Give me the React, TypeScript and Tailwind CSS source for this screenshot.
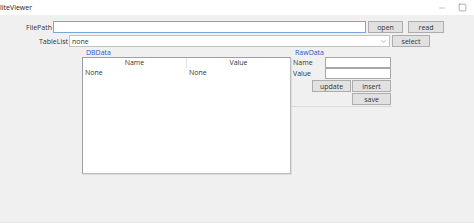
import { ChevronDown, Minus, Square } from 'lucide-react';

const FONT = { fontFamily: '"Open Sans", "Noto Sans", sans-serif' };

function Btn({ label, w }: { label: string; w: string }) {
  return (
    <div
      className={`${w} h-[12px] flex items-center justify-center bg-[#e1e1e1] border border-[#adadad] text-[7px] text-[#333] leading-none`}
    >
      {label}
    </div>
  );
}

export default function App() {
  return (
    <div className="w-[474px] h-[223px] bg-[#f0f0f0] flex flex-col overflow-hidden" style={FONT}>
      {/* Title bar */}
      <div className="h-[15px] bg-white flex items-center shrink-0">
        <span className="flex-1 text-[7px] text-[#222] leading-none">liteViewer</span>
        <div className="w-[10px] flex justify-center text-[#444]">
          <Minus size={8} strokeWidth={1} />
        </div>
        <div className="w-[10px] ml-[10px] mr-[7px] flex justify-center text-[#444]">
          <Square size={9} strokeWidth={1.1} />
        </div>
      </div>

      {/* Body */}
      <div className="flex-1 flex flex-col pt-[6px] border-b border-[#e6e6e6]">
        {/* FilePath row */}
        <div className="flex items-center h-[12px]">
          <div className="w-[53px] text-right text-[7px] leading-none text-[#333] pr-[1px]">FilePath</div>
          <div className="w-[313px] h-[12px] bg-white border border-[#7aa5d8]" />
          <div className="w-[2px]" />
          <Btn label="open" w="w-[35px]" />
          <div className="w-[5px]" />
          <Btn label="read" w="w-[36px]" />
        </div>

        {/* TableList row */}
        <div className="flex items-center h-[12px] mt-[2px]">
          <div className="w-[69px] text-right text-[7px] leading-none text-[#333] pr-[1px]">TableList</div>
          <div className="w-[321px] h-[12px] bg-white border border-[#c2c2c2] flex items-center justify-between pl-[2px] pr-[2px]">
            <span className="text-[7px] leading-none text-[#333]">none</span>
            <ChevronDown size={7} strokeWidth={1.5} className="text-[#555]" />
          </div>
          <div className="w-[2px]" />
          <Btn label="select" w="w-[38px]" />
        </div>

        {/* Data area */}
        <div className="flex mt-[2px] pl-[82px]">
          {/* DBData */}
          <div className="w-[209px] flex flex-col">
            <div className="h-[8px] pl-[4px] text-[7px] leading-[8px] text-[#2a55d0]">DBData</div>
            <div className="h-[117px] bg-white border border-[#9f9f9f] border-r-[#bdbdbd] border-b-[#bdbdbd] shadow-[1px_1px_0_#dcdcdc] flex flex-col">
              <div className="h-[10px] flex text-[7px] leading-[10px] text-[#333]">
                <div className="w-[104px] text-center border-r border-[#e5e5e5]">Name</div>
                <div className="flex-1 text-center">Value</div>
              </div>
              <div className="h-[10px] flex text-[7px] leading-[10px] text-[#333]">
                <div className="w-[104px] pl-[2px]">None</div>
                <div className="flex-1 pl-[2px]">None</div>
              </div>
            </div>
          </div>

          {/* RawData */}
          <div className="w-[101px] flex flex-col border-b border-[#dadada] self-start pb-[1px]">
            <div className="h-[8px] pl-[4px] text-[7px] leading-[8px] text-[#2a55d0]">RawData</div>
            <div className="flex items-center h-[11px]">
              <div className="w-[34px] pl-[2px] text-[7px] leading-none text-[#333]">Name</div>
              <div className="w-[66px] h-[11px] bg-white border border-[#a8a8a8]" />
            </div>
            <div className="flex items-center h-[11px]">
              <div className="w-[34px] pl-[2px] text-[7px] leading-none text-[#333]">Value</div>
              <div className="w-[66px] h-[11px] bg-white border border-[#a8a8a8]" />
            </div>
            <div className="flex h-[12px] mt-[1px] pl-[21px] gap-[1px]">
              <Btn label="update" w="w-[39px]" />
              <Btn label="insert" w="w-[39px]" />
            </div>
            <div className="flex h-[12px] mt-[1px] pl-[61px]">
              <Btn label="save" w="w-[39px]" />
            </div>
          </div>
        </div>
      </div>
    </div>
  );
}
